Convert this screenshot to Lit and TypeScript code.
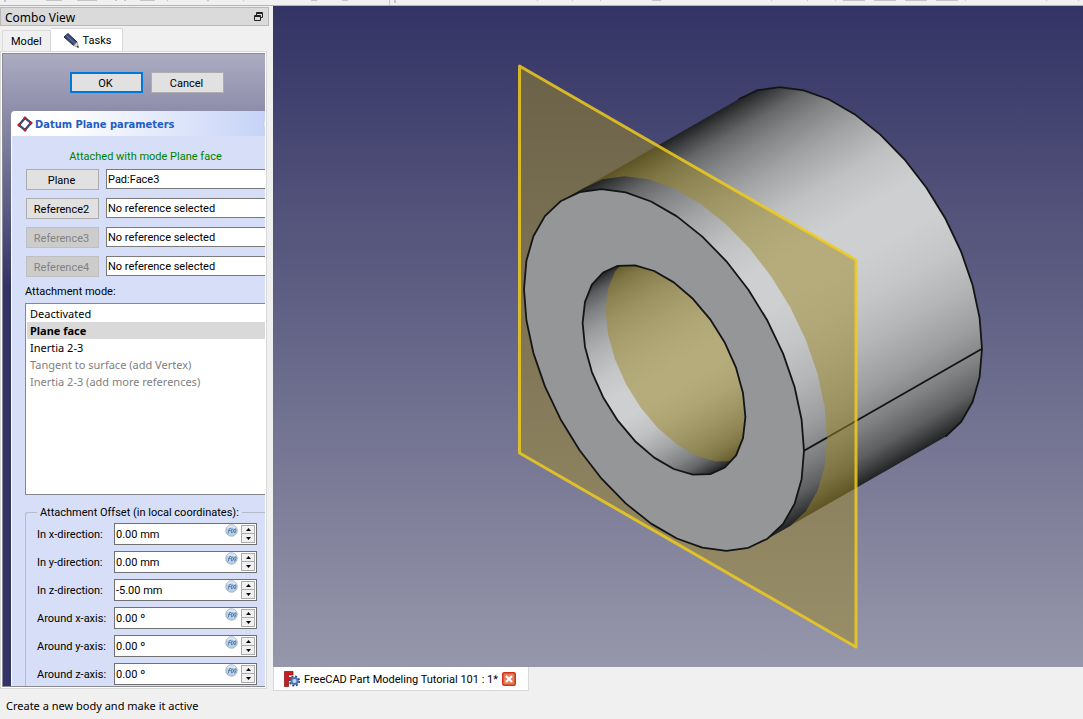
import { LitElement, html, svg, css } from "lit";
import { customElement, state } from "lit/decorators.js";

type Pt = [number, number];

const CENTER: Pt = [664, 370];
const DEPTH: Pt = [178, -102];
const CUT: Pt = [23, -13];

/** Vertices of an isometric circle, drawn as a polygon with n sides. */
const ring = (r: number, n: number, shift: Pt = [0, 0]): Pt[] =>
  Array.from({ length: n }, (_, k) => {
    const t = (2 * Math.PI * k) / n;
    return [
      CENTER[0] + shift[0] + r * Math.cos(t) * 0.866,
      CENTER[1] + shift[1] + r * (Math.cos(t) * 0.5 + Math.sin(t)),
    ];
  });
const pts = (list: Pt[]) => list.map((p) => p.map((v) => v.toFixed(1)).join(",")).join(" ");

const front = ring(161.7, 34);
const cut = ring(161.7, 34, CUT);
const back = ring(161.7, 34, DEPTH);
const bore = ring(94, 26);
const boreCut = ring(94, 26, CUT);
/** Outline of a cylinder between two rings: near half of a, far half of b. */
const hull = (a: Pt[], b: Pt[]): Pt[] => [...a.slice(4, 22), ...b.slice(21), ...b.slice(0, 5)];
const farEdge: Pt[] = [...back.slice(21), ...back.slice(0, 5)];

const SHADES: [number, number][] = [
  [0, 30], [0.03, 64], [0.07, 102], [0.12, 130], [0.2, 162], [0.3, 192], [0.4, 206],
  [0.5, 206], [0.6, 197], [0.7, 180], [0.8, 156], [0.88, 126], [0.94, 94], [0.98, 56], [1, 34],
];

@customElement("cad-scene")
class CadScene extends LitElement {
  static styles = css`
    :host { display: block; min-height: 0; overflow: hidden; }
    .scene { display: block; width: 100%; height: 100%; }
  `;
  render() {
    const stops = (flip: boolean) =>
      (flip ? [...SHADES].reverse() : SHADES).map(
        ([o, v]) => svg`<stop offset=${flip ? 1 - o : o} stop-color="rgb(${v},${v + 1},${v + 2})"></stop>`
      );
    const plane = "519.500,66 856,260 856,647 519.500,453";
    return html`
      <svg class="scene" viewBox="273 6 810 661" preserveAspectRatio="xMidYMid slice" role="img" aria-label="3D view">
        <defs>
          <linearGradient id="sky" x1="0" y1="0" x2="0" y2="1">
            <stop offset="0" stop-color="#333365"></stop>
            <stop offset="1" stop-color="#9797ab"></stop>
          </linearGradient>
          <linearGradient id="outer" gradientUnits="userSpaceOnUse" x1="565" y1="198.500" x2="763" y2="541.500">${stops(false)}</linearGradient>
          <linearGradient id="inner" gradientUnits="userSpaceOnUse" x1="606.500" y1="270.400" x2="721.500" y2="469.600">${stops(true)}</linearGradient>
          <clipPath id="hole"><polygon points=${pts(bore)}></polygon></clipPath>
        </defs>
        <rect x="-1000" y="6" width="3000" height="661" fill="url(#sky)"></rect>
        <polygon points=${pts(hull(front, back))} fill="url(#outer)"></polygon>
        <polyline points=${pts(farEdge)} fill="none" stroke="#141414" stroke-width="1.800"></polyline>
        <line x1="804" y1="450.800" x2="982" y2="348.800" stroke="#141414" stroke-width="1.800"></line>
        <polygon points=${plane} fill="rgb(156,136,38)" fill-opacity="0.500"></polygon>
        <polygon points=${plane} fill="none" stroke="rgb(240,204,28)" stroke-opacity="0.840" stroke-width="3" stroke-linejoin="round"></polygon>
        <polygon points=${pts(hull(front, cut))} fill="url(#outer)"></polygon>
        <line x1="804" y1="450.800" x2="827" y2="437.600" stroke="#141414" stroke-width="1.800"></line>
        <polygon points=${pts(front)} fill="#959698" stroke="#141414" stroke-width="1.800" stroke-linejoin="round"></polygon>
        <polygon points=${pts(bore)} fill="url(#inner)"></polygon>
        <g clip-path="url(#hole)">
          <polygon points=${pts(boreCut)} fill="rgb(156,136,38)" fill-opacity="0.500"></polygon>
        </g>
        <polygon points=${pts(bore)} fill="none" stroke="#141414" stroke-width="1.800" stroke-linejoin="round"></polygon>
      </svg>
    `;
  }
}

@customElement("quantity-field")
class QuantityField extends LitElement {
  static properties = { label: { type: String }, value: { type: String } };
  declare label: string;
  declare value: string;
  static styles = css`
    :host { display: grid; grid-template-columns: 71px 143px; gap: 6px; align-items: center; }
    .label { white-space: nowrap; padding-top: 1px; }
    .box {
      display: flex; height: 22px; box-sizing: border-box; padding: 0 1px 0 0;
      border: 1px solid #707070; background: #fff;
    }
    .value {
      flex: 1; min-width: 0; border: 0; outline: 0; padding: 1px 0 0 1px; margin: 0;
      background: none; font: inherit; color: #000;
    }
    .fx { width: 13px; height: 13px; margin-right: 3px; }
    .steps { display: grid; grid-template-rows: 1fr 1fr; width: 14px; padding: 1px 0; box-sizing: border-box; }
    .step {
      display: grid; place-items: center; padding: 0; margin: 0; min-height: 0;
      border: 1px solid #acacac; background: #f0f0f0;
    }
    .step + .step { border-top: 0; }
    .arrow { display: block; width: 5px; height: 3px; }
  `;
  render() {
    return html`
      <label class="label" for="v">${this.label}</label>
      <div class="box">
        <input class="value" id="v" type="text" .value=${this.value} />
        <svg class="fx" viewBox="0 0 13 13" aria-hidden="true">
          <circle cx="6.500" cy="6.500" r="5.700" fill="#bdd0e6" stroke="#90a4bd" stroke-width="0.800"></circle>
          <path d="M1.500 4.500A5.500 5.500 0 0 1 11.500 4.500Q6.500 2.500 1.500 4.500Z" fill="#dfe9f4"></path>
          <path d="M3 9.500L4.600 4.500L6 4.300M3.400 6.500H5.600M7 4.500Q5.800 7 6.600 9.200M7.600 5L9.600 8.800M9.700 5L7.400 8.800M10.500 4.500Q11.500 6.500 9.800 9.200" fill="none" stroke="#4d78ac" stroke-width="0.900"></path>
        </svg>
        <div class="steps">
          <button class="step" type="button" aria-label="Increase">
            <svg class="arrow" viewBox="0 0 5 3"><path d="M0 3L2.500 0L5 3Z"></path></svg>
          </button>
          <button class="step" type="button" aria-label="Decrease">
            <svg class="arrow" viewBox="0 0 5 3"><path d="M0 0L2.500 3L5 0Z"></path></svg>
          </button>
        </div>
      </div>
    `;
  }
}

/** Lower edges of the tool icons: [x, width, height]. */
const TOOL_EDGES = [
  [4, 2, 2], [46, 16, 1], [77, 20, 1], [115, 2, 1], [124, 2, 1], [140, 15, 1], [167, 1, 1], [207, 2, 1], [243, 1, 1],
  [311, 6, 1], [342, 6, 1], [389, 1, 5], [394, 2, 3], [537, 1, 1], [572, 1, 1], [600, 1, 1], [652, 9, 1],
  [771, 1, 1], [807, 1, 1], [835, 1, 1], [843, 22, 1], [874, 22, 1], [905, 22, 1], [936, 22, 1], [965, 1, 1],
  [1046, 1, 1], [1078, 1, 1],
];

@customElement("app-root")
class AppRoot extends LitElement {
  @state() private refs = [
    { name: "Plane", text: "Pad:Face3", off: false },
    { name: "Reference2", text: "No reference selected", off: false },
    { name: "Reference3", text: "No reference selected", off: true },
    { name: "Reference4", text: "No reference selected", off: true },
  ];
  @state() private mode = "Plane face";
  private modes = [
    { name: "Deactivated", off: false },
    { name: "Plane face", off: false },
    { name: "Inertia 2-3", off: false },
    { name: "Tangent to surface (add Vertex)", off: true },
    { name: "Inertia 2-3 (add more references)", off: true },
  ];
  private offsets = [
    ["In x-direction:", "0.00 mm"],
    ["In y-direction:", "0.00 mm"],
    ["In z-direction:", "-5.00 mm"],
    ["Around x-axis:", "0.00 º"],
    ["Around y-axis:", "0.00 º"],
    ["Around z-axis:", "0.00 º"],
  ];

  static styles = css`
    :host {
      display: grid; grid-template-rows: 6px minmax(0, 1fr) 28px; height: 100vh;
      background: #f0f0f0; color: #000; overflow: hidden;
      font: 11px/17px Roboto, "Noto Sans", sans-serif;
    }
    .tools { border-bottom: 1px solid #b4b6b0; }
    .tools-art { display: block; width: 100%; height: 5px; }
    .work { display: grid; grid-template-columns: 269px minmax(0, 1fr); column-gap: 4px; min-height: 0; }
    .dock { display: flex; flex-direction: column; min-height: 0; padding: 1px 0 2px; }
    .dock-title {
      display: flex; align-items: center; justify-content: space-between; height: 19px; flex: none;
      box-sizing: border-box; padding: 1px 5px 0 4px; border: 1px solid #b9b9b9; background: #dadada;
      font-size: 12px; font-family: "Noto Sans", "Open Sans", sans-serif;
    }
    .float { padding: 0 0 1px; border: 0; background: none; display: grid; }
    .tabs { display: flex; align-items: flex-end; flex: none; padding: 2px 0 0 2px; }
    .tab {
      display: flex; align-items: center; gap: 4px; height: 21px; padding: 1px 8px 0 8px; box-sizing: border-box;
      border: 1px solid #d9d9d9; border-bottom: 0; background: #f0f0f0; font: inherit; color: #000;
    }
    .tab-on { height: 23px; background: #fff; padding: 1px 11px 0 12px; border-left: 0; }
    .page {
      flex: 1; min-height: 0; margin-right: 2px; padding: 1px; display: flex;
      border: 1px solid #d9d9d9; background: #fff;
    }
    .tasks {
      flex: 1; min-width: 0; overflow: hidden; border: 1px solid #8a8a96; border-right: 0;
      background: linear-gradient(#ababc1, #333366 232px);
    }
    .actions { display: flex; gap: 8px; padding: 18px 0 18px 67px; }
    .btn {
      height: 21px; width: 73px; padding: 1px 2px 0 0; box-sizing: border-box; border: 1px solid #adadad;
      background: #e1e1e1; font: inherit; color: #000;
    }
    .btn-main { border: 2px solid #0078d7; }
    .btn:disabled { background: #cccccc; border-color: #bfbfbf; color: #838383; }
    .group { margin-left: 8px; }
    .group-head {
      display: flex; align-items: center; height: 25px; padding-left: 6px; gap: 2px;
      border-radius: 4px 0 0 0; background: linear-gradient(90deg, #fff 20%, #c6d3f7);
    }
    .group-name {
      flex: 1; margin: 0; padding-top: 1px; font: bold 11px/17px "DejaVu Sans Condensed", "Noto Sans", sans-serif;
      color: #215dc6; white-space: nowrap;
    }
    .fold { width: 18px; height: 18px; margin-right: -16px; padding: 0; border: 1px solid #b9cdea; border-radius: 9px; background: #e4ecfa; flex: none; }
    .group-body { border-left: 1px solid #fff; background: #d6dff7; padding: 12px 0 0 14px; }
    .state { margin: 0 0 4px; text-align: center; color: #008000; }
    .refs { display: grid; gap: 8px; }
    .ref { display: grid; grid-template-columns: 73px minmax(0, 1fr); gap: 7px; }
    .ref-text {
      min-width: 0; height: 20px; box-sizing: border-box; border: 1px solid #7a7a7a; border-right: 0;
      padding: 1px 0 0 1px; margin: 0; font: inherit; color: #000; background: #fff; border-radius: 0; outline: 0;
    }
    .mode-title { margin: 6px 0 3px -1px; }
    .modes {
      list-style: none; margin: 0 0 0 -1px; padding: 1px 0 0 1px; height: 192px; box-sizing: border-box;
      border: 1px solid #828790; border-right: 0; background: #fff;
      font-family: "Noto Sans", "Open Sans", sans-serif;
    }
    .mode { padding: 0 3px; height: 17px; }
    .mode-on { background: #d9d9d9; font-weight: bold; }
    .mode-off { color: #808080; }
    .offset {
      margin: 8px 0 0 -1px; min-width: 0; padding: 2px 0 20px 11px; border: 1px solid #b8bcc8; border-right: 0;
      border-radius: 3px 0 0 3px;
    }
    .offset-name { padding: 1px 3px 0; }
    .fields { display: grid; gap: 6px; }
    .view { display: grid; grid-template-rows: minmax(0, 1fr) 24px; min-height: 0; }
    .docs { display: flex; }
    .doc {
      display: flex; align-items: center; gap: 4px; padding: 1px 12px 0 10px; box-sizing: border-box;
      border: 1px solid #d9d9d9; border-top: 0; background: #fff; white-space: nowrap;
    }
    .close { padding: 0; border: 0; background: none; display: grid; }
    .status { padding: 6px 6px 0; font-family: "Noto Sans", "Open Sans", sans-serif; }
  `;

  render() {
    return html`
      <div class="tools">
        <svg class="tools-art" viewBox="0 0 1083 5" preserveAspectRatio="xMinYMin slice" aria-hidden="true">
          ${TOOL_EDGES.map(([x, w, h]) => svg`<rect x=${x} y="0" width=${w} height=${h} fill="#c4c4c4"></rect>`)}
        </svg>
      </div>
      <main class="work">
        <section class="dock">
          <div class="dock-title">
            <span>Combo View</span>
            <button class="float" aria-label="Float panel">
              <svg width="9" height="9" viewBox="0 0 9 9" fill="none" stroke="#222">
                <path d="M2.500 3V0.500H8.500V5.500H6.500M2 1.500H9"></path>
                <path d="M0.500 3.500H6.500V8.500H0.500ZM0 4.500H7"></path>
              </svg>
            </button>
          </div>
          <div class="tabs" role="tablist">
            <button class="tab" role="tab">Model</button>
            <button class="tab tab-on" role="tab" aria-selected="true">
              <svg width="16" height="16" viewBox="0 0 16 16" aria-hidden="true">
                <path d="M1 4L5 0.500L14 9L10.500 12.500Z" fill="#3b4a78" stroke="#20294d"></path>
                <path d="M3.500 2.500L12.500 11" stroke="#6f80b0"></path>
                <path d="M14 9L15.500 14.500L10.500 12.500Z" fill="#ddd6c8" stroke="#777" stroke-width="0.600"></path>
                <path d="M15.600 14.700L13.700 14L15.100 12.600Z" fill="#222"></path>
              </svg>
              Tasks
            </button>
          </div>
          <div class="page">
            <div class="tasks">
              <div class="actions">
                <button class="btn btn-main">OK</button>
                <button class="btn">Cancel</button>
              </div>
              <div class="group">
                <div class="group-head">
                  <svg width="16" height="16" viewBox="0 0 16 16" aria-hidden="true">
                    <path d="M2 9L8 2L14 7L8 14Z" fill="#fff" stroke="#1b2f55" stroke-width="2.200"></path>
                    <path d="M2 9L8 2L14 7L8 14Z" fill="none" stroke="#5d84bb" stroke-width="0.700"></path>
                    <g fill="#d8141b">
                      <circle cx="2" cy="9" r="1.500"></circle><circle cx="8" cy="2" r="1.500"></circle>
                      <circle cx="14" cy="7" r="1.500"></circle><circle cx="8" cy="14" r="1.500"></circle>
                    </g>
                  </svg>
                  <h2 class="group-name">Datum Plane parameters</h2>
                  <button class="fold" aria-label="Collapse"></button>
                </div>
                <div class="group-body">
                  <p class="state">Attached with mode Plane face</p>
                  <div class="refs">
                    ${this.refs.map(
                      (r) => html`<div class="ref">
                        <button class="btn" ?disabled=${r.off}>${r.name}</button>
                        <input class="ref-text" type="text" aria-label=${r.name} .value=${r.text} />
                      </div>`
                    )}
                  </div>
                  <div class="mode-title" id="mode-title">Attachment mode:</div>
                  <ul class="modes" role="listbox" aria-labelledby="mode-title">
                    ${this.modes.map(
                      (m) => html`<li
                        class="mode ${m.name === this.mode ? "mode-on" : ""} ${m.off ? "mode-off" : ""}"
                        role="option"
                        aria-selected=${m.name === this.mode}
                        @click=${() => { if (!m.off) this.mode = m.name; }}
                      >${m.name}</li>`
                    )}
                  </ul>
                  <fieldset class="offset">
                    <legend class="offset-name">Attachment Offset (in local coordinates):</legend>
                    <div class="fields">
                      ${this.offsets.map(([l, v]) => html`<quantity-field .label=${l} .value=${v}></quantity-field>`)}
                    </div>
                  </fieldset>
                </div>
              </div>
            </div>
          </div>
        </section>
        <section class="view">
          <cad-scene></cad-scene>
          <div class="docs">
            <div class="doc">
              <svg width="16" height="16" viewBox="0 0 16 16" aria-hidden="true">
                <path d="M0.500 0.500H9V4H4.500V6.500H7.500V9.500H4.500V15.500H0.500Z" fill="#cb1f1f" stroke="#7c1010" stroke-width="0.700"></path>
                <circle cx="10.500" cy="10" r="4.600" fill="none" stroke="#2f4f84" stroke-width="2" stroke-dasharray="2 1.610"></circle>
                <circle cx="10.500" cy="10" r="3.100" fill="#c9d8ee" stroke="#4e76b3" stroke-width="2"></circle>
              </svg>
              <span>FreeCAD Part Modeling Tutorial 101 : 1*</span>
              <button class="close" aria-label="Close document">
                <svg width="14" height="14" viewBox="0 0 14 14">
                  <rect x="0.750" y="0.750" width="12.500" height="12.500" rx="1.500" fill="#e0825a" stroke="#d5301c" stroke-width="1.500"></rect>
                  <path d="M4 4L10 10M10 4L4 10" stroke="#fff" stroke-width="2.200"></path>
                </svg>
              </button>
            </div>
          </div>
        </section>
      </main>
      <footer class="status">Create a new body and make it active</footer>
    `;
  }
}
